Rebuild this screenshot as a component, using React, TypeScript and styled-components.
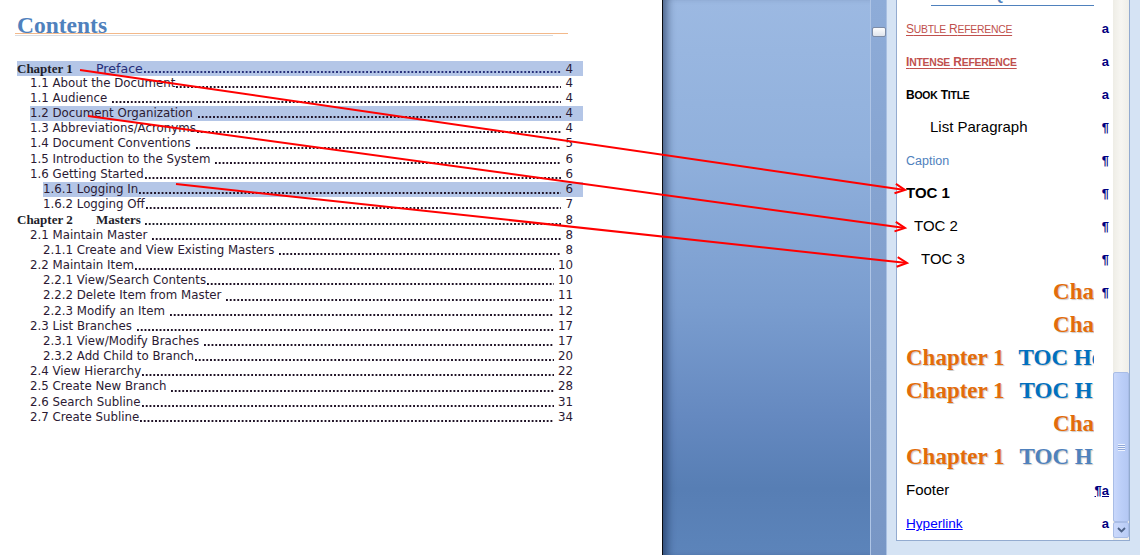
import React from "react";
import styled, { createGlobalStyle } from "styled-components";

const GlobalStyle = createGlobalStyle`
  html, body { margin: 0; padding: 0; background: #fff; }
  body {
    width: 1140px;
    height: 555px;
    overflow: hidden;
    font-family: "Liberation Sans", Arial, sans-serif;
  }
`;

const Screen = styled.div`
  position: relative;
  display: flex;
  width: 1140px;
  height: 555px;
  overflow: hidden;
`;

/* ---------------- document page ---------------- */

const DocPage = styled.div`
  width: 662px;
  flex: none;
  box-sizing: border-box;
  padding: 16px 0 0 17px;
  background: #fff;
  display: flex;
  flex-direction: column;
`;

const Title = styled.h1`
  margin: 0;
  height: 18px;
  font-family: "Liberation Serif", "Times New Roman", serif;
  font-weight: 700;
  font-size: 23.5px;
  line-height: 18px;
  color: #4f81bd;
`;

const TitleRule = styled.div<{ $w: number; $c: string; $gap: number }>`
  width: ${(p) => p.$w}px;
  height: 1px;
  margin: ${(p) => p.$gap}px 0 0 -2px;
  background: ${(p) => p.$c};
`;

const TocList = styled.div`
  margin-top: 24.5px;
  display: flex;
  flex-direction: column;
`;

const TocRow = styled.div<{ $level: number; $hl?: boolean }>`
  display: flex;
  align-items: baseline;
  height: 15.2px;
  line-height: 15.2px;
  box-sizing: border-box;
  margin-left: ${(p) => p.$level * 13}px;
  width: ${(p) => 566 - p.$level * 13}px;
  padding-right: 10px;
  background: ${(p) => (p.$hl ? "#b4c6e7" : "transparent")};
  font-family: "DejaVu Sans", Tahoma, sans-serif;
  font-size: 11.8px;
  color: #2b1a33;
  white-space: nowrap;
`;

const ChapterLabel = styled.span`
  width: 79px;
  flex: none;
  font-family: "Liberation Serif", "Times New Roman", serif;
  font-weight: 700;
  font-size: 13px;
  color: #1e1e2a;
`;

const ChapterTitle = styled.span<{ $serif?: boolean }>`
  flex: none;
  white-space: pre;
  font-family: ${(p) =>
    p.$serif ? `"Liberation Serif", "Times New Roman", serif` : `"DejaVu Sans", Tahoma, sans-serif`};
  font-weight: ${(p) => (p.$serif ? 700 : 400)};
  font-size: ${(p) => (p.$serif ? "13px" : "12.6px")};
  color: ${(p) => (p.$serif ? "#1e1e2a" : "#27307a")};
`;

const EntryText = styled.span`
  flex: none;
  white-space: pre;
`;

const Leader = styled.span<{ $c?: string }>`
  flex: 1 1 0;
  min-width: 0;
  align-self: stretch;
  background-image: linear-gradient(
    to right,
    ${(p) => p.$c || "#1f1226"} 0px,
    ${(p) => p.$c || "#1f1226"} 1.6px,
    transparent 1.6px,
    transparent 3.78px
  );
  background-size: 3.78px 1.6px;
  background-position: 1px 10.2px;
  background-repeat: repeat-x;
`;

const PageNum = styled.span`
  flex: none;
  padding-left: 4px;
`;

/* ---------------- blue backdrop + doc scrollbar ---------------- */

const Backdrop = styled.div`
  width: 208px;
  flex: none;
  box-sizing: border-box;
  border-left: 1px solid #0b0b10;
  background: linear-gradient(
    to bottom,
    #9cb9e2 0%,
    #90b0dc 28%,
    #7a9dcf 55%,
    #6589c0 75%,
    #577eb4 88%,
    #5c84ba 100%
  );
  box-shadow: inset 9px 0 8px -5px rgba(10, 25, 60, 0.55);
`;

const DocScroll = styled.div`
  width: 17px;
  flex: none;
  box-sizing: border-box;
  border-left: 1px solid #afc5e6;
  border-right: 1px solid #a9c0e2;
  background: linear-gradient(to bottom, #8eacd8, #7d9bc9 70%, #7896c5);
  padding-top: 27px;
  display: flex;
  flex-direction: column;
  align-items: center;
`;

const DocThumb = styled.div`
  width: 14px;
  height: 10px;
  box-sizing: border-box;
  border: 1px solid #7d8ca6;
  border-radius: 2px;
  background: linear-gradient(to bottom, #fdfdfe, #dfe4ec);
`;

/* ---------------- styles pane ---------------- */

const PaneArea = styled.div`
  width: 253px;
  flex: none;
  box-sizing: border-box;
  padding: 0 10px 14px 9px;
  background: #d5e3f4;
  display: flex;
`;

const Pane = styled.div`
  flex: 1;
  display: flex;
  box-sizing: border-box;
  border: 1px solid #93abd0;
  border-top: none;
  background: #fff;
  overflow: hidden;
`;

const StyleList = styled.div`
  width: 216px;
  flex: none;
  overflow: hidden;
  display: flex;
  flex-direction: column;
`;

const StyleScroller = styled.div`
  margin-top: -21.5px;
  display: flex;
  flex-direction: column;
`;

const StyleRow = styled.div<{ $indent?: number }>`
  height: 33px;
  flex: none;
  box-sizing: border-box;
  display: flex;
  align-items: center;
  padding: 0 4px 0 ${(p) => 9 + (p.$indent || 0)}px;
`;

const StyleName = styled.div<{ $right?: boolean }>`
  flex: 1;
  min-width: 0;
  overflow: hidden;
  white-space: nowrap;
  text-align: ${(p) => (p.$right ? "right" : "left")};
`;

const Mark = styled.span<{ $u?: boolean }>`
  width: 15px;
  flex: none;
  text-align: right;
  font-family: "Liberation Sans", Arial, sans-serif;
  font-weight: 700;
  font-size: 13px;
  color: #000080;
  text-decoration: ${(p) => (p.$u ? "underline" : "none")};
`;

const QuoteBox = styled.div`
  margin: 0 0 0 25px;
  height: 22px;
  box-sizing: border-box;
  border-bottom: 1px solid #4f81bd;
  padding: 1px 0 0 6px;
  font-family: "Liberation Sans", Arial, sans-serif;
  font-weight: 700;
  font-style: italic;
  font-size: 15px;
  line-height: 19px;
  color: #4f81bd;
`;

const RefText = styled.span<{ $bold?: boolean; $color: string; $u?: boolean }>`
  font-family: "Liberation Sans", Arial, sans-serif;
  font-size: 12px;
  letter-spacing: ${(p) => (p.$bold ? "-0.2px" : "-0.25px")};
  font-weight: ${(p) => (p.$bold ? 700 : 400)};
  color: ${(p) => p.$color};
  text-decoration: ${(p) => (p.$u ? "underline" : "none")};
  text-underline-offset: 2px;
`;

const SmallCap = styled.span`
  font-size: 10.4px;
  text-transform: uppercase;
`;

const PlainText = styled.span<{ $size: number; $bold?: boolean; $color?: string }>`
  font-family: "Liberation Sans", Arial, sans-serif;
  font-size: ${(p) => p.$size}px;
  font-weight: ${(p) => (p.$bold ? 700 : 400)};
  color: ${(p) => p.$color || "#000"};
`;

const HeadingText = styled.span<{ $color: string; $gap?: number }>`
  font-family: "Liberation Serif", "Times New Roman", serif;
  font-weight: 700;
  font-size: 23px;
  color: ${(p) => p.$color};
  margin-left: ${(p) => p.$gap || 0}px;
  text-shadow: 1px 1px 1px rgba(0, 0, 0, 0.22);
`;

const LinkText = styled.span`
  font-family: "Liberation Sans", Arial, sans-serif;
  font-size: 13.6px;
  color: #0000ff;
  text-decoration: underline;
`;

const PaneScroll = styled.div`
  width: 16px;
  flex: none;
  display: flex;
  flex-direction: column;
  box-sizing: border-box;
  padding-bottom: 2px;
  background: linear-gradient(to right, #eeede6, #f7f6f2 50%, #efeee8);
`;

const ScrollTrack = styled.div`
  flex: 1;
`;

const PaneThumb = styled.div`
  height: 150px;
  box-sizing: border-box;
  border: 1px solid #a9bde6;
  border-radius: 2px;
  background: linear-gradient(to right, #c9d8fb, #bccff8 50%, #b4c8f3);
  display: flex;
  align-items: center;
  justify-content: center;
`;

const Grip = styled.div`
  width: 7px;
  height: 7px;
  background: repeating-linear-gradient(
    to bottom,
    #eef3fe 0px,
    #eef3fe 1px,
    #8ea7d8 1px,
    #8ea7d8 2px
  );
`;

const PaneButton = styled.div`
  height: 16px;
  box-sizing: border-box;
  border: 1px solid #a9bde6;
  border-radius: 2px;
  background: linear-gradient(to right, #cbd9fb, #b8ccf6);
  display: flex;
  align-items: center;
  justify-content: center;
`;

/* ---------------- arrows overlay ---------------- */

const Overlay = styled.svg`
  position: absolute;
  left: 0;
  top: 0;
  width: 1140px;
  height: 555px;
  pointer-events: none;
`;

type Entry = {
  level: number;
  text: string;
  page: string;
  hl?: boolean;
};

type Chapter = { chapter: string; title: string; serif?: boolean; page: string; hl?: boolean };

const entries: (Entry | Chapter)[] = [
  { chapter: "Chapter 1", title: "Preface", page: "4", hl: true },
  { level: 1, text: "1.1 About the Document", page: "4" },
  { level: 1, text: "1.1 Audience ", page: "4" },
  { level: 1, text: "1.2 Document Organization ", page: "4", hl: true },
  { level: 1, text: "1.3 Abbreviations/Acronyms", page: "4" },
  { level: 1, text: "1.4 Document Conventions ", page: "5" },
  { level: 1, text: "1.5 Introduction to the System ", page: "6" },
  { level: 1, text: "1.6 Getting Started", page: "6" },
  { level: 2, text: "1.6.1 Logging In", page: "6", hl: true },
  { level: 2, text: "1.6.2 Logging Off", page: "7" },
  { chapter: "Chapter 2", title: "Masters ", serif: true, page: "8" },
  { level: 1, text: "2.1 Maintain Master ", page: "8" },
  { level: 2, text: "2.1.1 Create and View Existing Masters ", page: "8" },
  { level: 1, text: "2.2 Maintain Item", page: "10" },
  { level: 2, text: "2.2.1 View/Search Contents", page: "10" },
  { level: 2, text: "2.2.2 Delete Item from Master ", page: "11" },
  { level: 2, text: "2.2.3 Modify an Item ", page: "12" },
  { level: 1, text: "2.3 List Branches ", page: "17" },
  { level: 2, text: "2.3.1 View/Modify Braches ", page: "17" },
  { level: 2, text: "2.3.2 Add Child to Branch", page: "20" },
  { level: 1, text: "2.4 View Hierarchy", page: "22" },
  { level: 1, text: "2.5 Create New Branch ", page: "28" },
  { level: 1, text: "2.6 Search Subline", page: "31" },
  { level: 1, text: "2.7 Create Subline", page: "34" },
];

const arrows: [number, number, number, number][] = [
  [80, 70, 905, 190],
  [88, 116, 905, 228],
  [176, 184, 907, 263],
];

function headPoints(x1: number, y1: number, x2: number, y2: number): string {
  const a = Math.atan2(y2 - y1, x2 - x1);
  const L = 11;
  const s = 0.45;
  const p1 = [x2 - L * Math.cos(a - s), y2 - L * Math.sin(a - s)];
  const p2 = [x2 - L * Math.cos(a + s), y2 - L * Math.sin(a + s)];
  return `${p1[0].toFixed(1)},${p1[1].toFixed(1)} ${x2},${y2} ${p2[0].toFixed(1)},${p2[1].toFixed(1)}`;
}

/* small caps rendered with a full-size first letter and reduced capitals */
function SmallCaps({ text }: { text: string }) {
  const words = text.split(" ");
  return (
    <>
      {words.map((w, i) => (
        <React.Fragment key={i}>
          {i > 0 ? " " : ""}
          {w[0]}
          <SmallCap>{w.slice(1)}</SmallCap>
        </React.Fragment>
      ))}
    </>
  );
}

export default function App() {
  return (
    <>
      <GlobalStyle />
      <Screen>
        <DocPage>
          <Title>Contents</Title>
          <TitleRule $w={553} $c="#f3b98a" $gap={-1} />
          <TitleRule $w={538} $c="#d9dde3" $gap={1} />
          <TocList>
            {entries.map((e, i) =>
              "chapter" in e ? (
                <TocRow key={i} $level={0} $hl={e.hl}>
                  <ChapterLabel>{e.chapter}</ChapterLabel>
                  <ChapterTitle $serif={e.serif}>{e.title}</ChapterTitle>
                  <Leader $c={e.serif ? "#1e1e2a" : "#27307a"} />
                  <PageNum>{e.page}</PageNum>
                </TocRow>
              ) : (
                <TocRow key={i} $level={e.level} $hl={e.hl}>
                  <EntryText>{e.text}</EntryText>
                  <Leader />
                  <PageNum>{e.page}</PageNum>
                </TocRow>
              )
            )}
          </TocList>
        </DocPage>

        <Backdrop />

        <DocScroll>
          <DocThumb />
        </DocScroll>

        <PaneArea>
          <Pane>
            <StyleList>
              <StyleScroller>
                <StyleRow>
                  <StyleName>
                    <QuoteBox>Intense Quote</QuoteBox>
                  </StyleName>
                  <Mark />
                </StyleRow>
                <StyleRow>
                  <StyleName>
                    <RefText $color="#c0504d" $u>
                      <SmallCaps text="Subtle Reference" />
                    </RefText>
                  </StyleName>
                  <Mark>a</Mark>
                </StyleRow>
                <StyleRow>
                  <StyleName>
                    <RefText $color="#c0504d" $u $bold>
                      <SmallCaps text="Intense Reference" />
                    </RefText>
                  </StyleName>
                  <Mark>a</Mark>
                </StyleRow>
                <StyleRow>
                  <StyleName>
                    <RefText $color="#000" $bold>
                      <SmallCaps text="Book Title" />
                    </RefText>
                  </StyleName>
                  <Mark>a</Mark>
                </StyleRow>
                <StyleRow $indent={24}>
                  <StyleName>
                    <PlainText $size={15}>List Paragraph</PlainText>
                  </StyleName>
                  <Mark>¶</Mark>
                </StyleRow>
                <StyleRow>
                  <StyleName>
                    <PlainText $size={12.5} $color="#4f81bd">Caption</PlainText>
                  </StyleName>
                  <Mark>¶</Mark>
                </StyleRow>
                <StyleRow>
                  <StyleName>
                    <PlainText $size={15} $bold>TOC 1</PlainText>
                  </StyleName>
                  <Mark>¶</Mark>
                </StyleRow>
                <StyleRow $indent={8}>
                  <StyleName>
                    <PlainText $size={15}>TOC 2</PlainText>
                  </StyleName>
                  <Mark>¶</Mark>
                </StyleRow>
                <StyleRow $indent={15}>
                  <StyleName>
                    <PlainText $size={15}>TOC 3</PlainText>
                  </StyleName>
                  <Mark>¶</Mark>
                </StyleRow>
                <StyleRow>
                  <StyleName $right>
                    <HeadingText $color="#e36c0a">Cha</HeadingText>
                  </StyleName>
                  <Mark>¶</Mark>
                </StyleRow>
                <StyleRow>
                  <StyleName $right>
                    <HeadingText $color="#e36c0a">Cha</HeadingText>
                  </StyleName>
                  <Mark />
                </StyleRow>
                <StyleRow>
                  <StyleName>
                    <HeadingText $color="#e36c0a">Chapter 1</HeadingText>
                    <HeadingText $color="#0070c0" $gap={14}>TOC He</HeadingText>
                  </StyleName>
                  <Mark />
                </StyleRow>
                <StyleRow>
                  <StyleName>
                    <HeadingText $color="#e36c0a">Chapter 1</HeadingText>
                    <HeadingText $color="#0070c0" $gap={15}>TOC H</HeadingText>
                  </StyleName>
                  <Mark />
                </StyleRow>
                <StyleRow>
                  <StyleName $right>
                    <HeadingText $color="#e36c0a">Cha</HeadingText>
                  </StyleName>
                  <Mark />
                </StyleRow>
                <StyleRow>
                  <StyleName>
                    <HeadingText $color="#e36c0a">Chapter 1</HeadingText>
                    <HeadingText $color="#4f81bd" $gap={15}>TOC H</HeadingText>
                  </StyleName>
                  <Mark />
                </StyleRow>
                <StyleRow>
                  <StyleName>
                    <PlainText $size={15}>Footer</PlainText>
                  </StyleName>
                  <Mark $u>¶a</Mark>
                </StyleRow>
                <StyleRow>
                  <StyleName>
                    <LinkText>Hyperlink</LinkText>
                  </StyleName>
                  <Mark>a</Mark>
                </StyleRow>
              </StyleScroller>
            </StyleList>
            <PaneScroll>
              <ScrollTrack />
              <PaneThumb>
                <Grip />
              </PaneThumb>
              <PaneButton>
                <svg width="9" height="6" viewBox="0 0 9 6">
                  <polyline points="1,1 4.5,4.5 8,1" fill="none" stroke="#4d6287" strokeWidth="1.8" />
                </svg>
              </PaneButton>
            </PaneScroll>
          </Pane>
        </PaneArea>

        <Overlay viewBox="0 0 1140 555">
          {arrows.map(([x1, y1, x2, y2], i) => (
            <g key={i} stroke="#ff0000" strokeWidth={2} fill="none">
              <line x1={x1} y1={y1} x2={x2} y2={y2} />
              <polyline points={headPoints(x1, y1, x2, y2)} />
            </g>
          ))}
        </Overlay>
      </Screen>
    </>
  );
}
